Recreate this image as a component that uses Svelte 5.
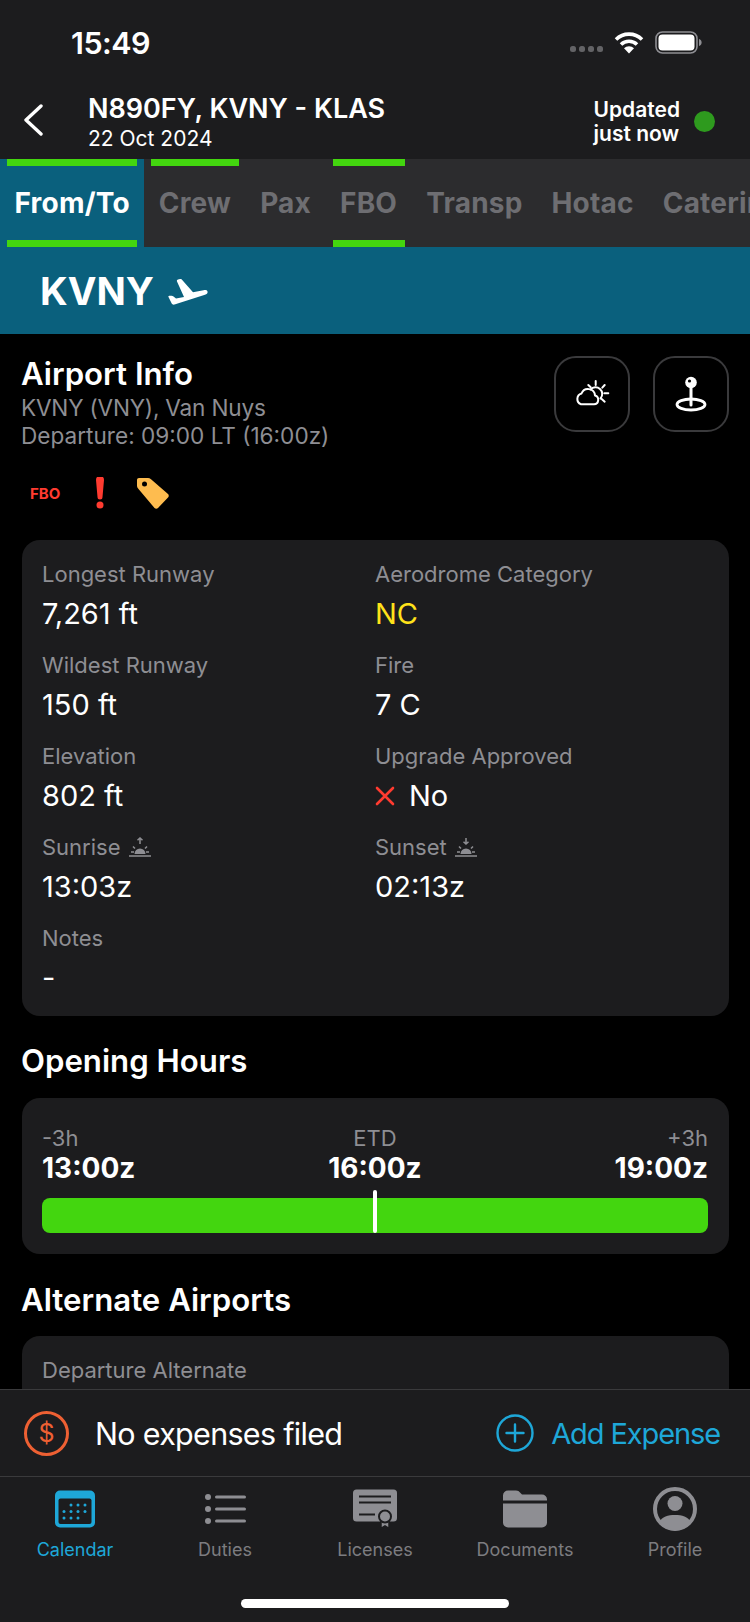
<script>
  const sections = [
    { label: 'From/To', top: true, bottom: true, active: true },
    { label: 'Crew', top: true },
    { label: 'Pax' },
    { label: 'FBO', top: true, bottom: true },
    { label: 'Transp' },
    { label: 'Hotac' },
    { label: 'Catering' },
  ];
</script>

<div class="screen">
  <header class="top">
    <div class="status">
      <span class="clock">15:49</span>
      <div class="status-icons">
        <div class="signal"><i></i><i></i><i></i><i></i></div>
        <svg width="30" height="23" viewBox="0 0 30 23" fill="none" stroke="#fff" stroke-width="3.6">
          <path d="M2 8.500a18.500 18.500 0 0 1 26 0" />
          <path d="M7 13.500a11.500 11.500 0 0 1 16 0" />
          <path d="M15 22.500l-5-5.200a7 7 0 0 1 10 0z" fill="#fff" stroke="none" />
        </svg>
        <svg width="47" height="23" viewBox="0 0 47 23">
          <rect x="1" y="1" width="41" height="21" rx="6.500" fill="none" stroke="#8e8e93" stroke-width="1.600" />
          <rect x="3.500" y="3.500" width="36" height="16" rx="4" fill="#fff" />
          <path d="M44 8c1.600.4 2.600 1.800 2.600 3.500S45.600 14.600 44 15z" fill="#8e8e93" />
        </svg>
      </div>
    </div>
    <div class="nav">
      <svg class="back" width="20" height="32" viewBox="0 0 20 32" fill="none" stroke="#fff" stroke-width="3.400" stroke-linecap="round" stroke-linejoin="round">
        <path d="M18 2L3 16l15 14" />
      </svg>
      <div class="nav-title">
        <div class="flight">N890FY, KVNY - KLAS</div>
        <div class="date">22 Oct 2024</div>
      </div>
      <div class="updated">Updated<br />just now</div>
      <span class="sync-dot"></span>
    </div>
  </header>

  <nav class="sections">
    {#each sections as s}
      <div class="section" class:active={s.active}>
        <div class="section-inner" class:bar-top={s.top} class:bar-bottom={s.bottom}>{s.label}</div>
      </div>
    {/each}
  </nav>

  <div class="banner">
    <span>KVNY</span>
    <svg width="40" height="26" viewBox="18 13 40 26" fill="#fff">
      <path d="M18.500 31c-.4-.8 0-1.300.8-1.300h2.200c.8 0 1.400.3 2 .8l2.500 2 8-1.400L27 15.500c-.4-.9 0-1.700 1-1.900l2-.6c.8-.2 1.400 0 2 .7l11 12.500 10.500-2c2-.4 3.600 0 4 1.300.4 1.400-.5 2.500-2.500 3.200L24.500 38.500c-1 .3-2.200.2-2.800-.9z" />
    </svg>
  </div>

  <main class="content">
    <div class="info-head">
      <div class="info-text">
        <h2>Airport Info</h2>
        <p class="place">KVNY (VNY), Van Nuys</p>
        <p>Departure: 09:00 LT (16:00z)</p>
      </div>
      <button class="square" aria-label="Weather">
        <svg width="36" height="28" viewBox="0 0 36 28" fill="none" stroke="#fff" stroke-width="2" stroke-linecap="round" stroke-linejoin="round">
          <path d="M7 24.300h13a4.500 4.500 0 0 0 1-8.800 7 7 0 0 0-13.500-2A5.700 5.700 0 0 0 7 24.300z" />
          <path d="M16.500 9.500a6.500 6.500 0 0 1 10 9" />
          <path d="M14.300 5l2.400 2.300M21.700 1v4M30.700 5l-2.400 2.700M34.300 13.300h-4M30.700 21.700l-3-2.700" />
        </svg>
      </button>
      <button class="square" aria-label="Map">
        <svg width="32" height="36" viewBox="0 0 32 36" fill="none">
          <ellipse cx="16" cy="28.500" rx="14" ry="5.500" stroke="#fff" stroke-width="2.800" />
          <path d="M16 8v21" stroke="#fff" stroke-width="3" stroke-linecap="round" />
          <circle cx="16" cy="6.500" r="5.800" fill="#fff" />
          <circle cx="14.500" cy="5" r="1.600" fill="#000" />
        </svg>
      </button>
    </div>

    <div class="flags">
      <span class="fbo">FBO</span>
      <svg width="12" height="32" viewBox="0 0 12 32" fill="#ff3b30">
        <path d="M2 3a4 4 0 0 1 8 0l-1.500 17a2.500 2.500 0 0 1-5 0z" />
        <circle cx="6" cy="28" r="3.500" />
      </svg>
      <svg width="33" height="33" viewBox="0 0 33 33" fill="#febc4f">
        <path d="M2 1h9c1 0 2 .4 3 1.200L31 17c1 1 1 2.500 0 3.500L21 31c-1 1-2.500 1-3.500 0L1.500 12C.5 11 0 10 0 9V3C0 1.800.8 1 2 1z" />
        <circle cx="7.500" cy="7" r="2.500" fill="#000" />
      </svg>
    </div>

    <section class="card facts">
      <div class="fact"><span>Longest Runway</span><strong>7,261 ft</strong></div>
      <div class="fact"><span>Aerodrome Category</span><strong class="yellow">NC</strong></div>
      <div class="fact"><span>Wildest Runway</span><strong>150 ft</strong></div>
      <div class="fact"><span>Fire</span><strong>7 C</strong></div>
      <div class="fact"><span>Elevation</span><strong>802 ft</strong></div>
      <div class="fact">
        <span>Upgrade Approved</span>
        <strong class="with-x">
          <svg width="20" height="20" viewBox="0 0 20 20" stroke="#ff3b30" stroke-width="2.600" stroke-linecap="round"><path d="M2 2l16 16M18 2L2 18" /></svg>
          No
        </strong>
      </div>
      <div class="fact">
        <span>Sunrise
          <svg class="sun" width="24" height="20" viewBox="0 0 24 20" fill="none" stroke="#8e8e93" stroke-width="1.500">
            <path d="M12 7V1M9.500 3.300L12 1l2.500 2.300M1 19h22M3 15h3M18 15h3M5 9.500l2 2M19 9.500l-2 2" />
            <path d="M6.500 17a5.500 5.500 0 0 1 11 0z" fill="#8e8e93" stroke="none" />
          </svg>
        </span>
        <strong>13:03z</strong>
      </div>
      <div class="fact">
        <span>Sunset
          <svg class="sun" width="24" height="20" viewBox="0 0 24 20" fill="none" stroke="#8e8e93" stroke-width="1.500">
            <path d="M12 1v6M9.500 4.700L12 7l2.500-2.300M1 19h22M3 15h3M18 15h3M5 9.500l2 2M19 9.500l-2 2" />
            <path d="M6.500 17a5.500 5.500 0 0 1 11 0z" fill="#8e8e93" stroke="none" />
          </svg>
        </span>
        <strong>02:13z</strong>
      </div>
      <div class="fact"><span>Notes</span><strong>-</strong></div>
    </section>

    <h2 class="block-title">Opening Hours</h2>
    <section class="card hours">
      <div class="hours-row">
        <div><span>-3h</span><strong>13:00z</strong></div>
        <div class="mid"><span>ETD</span><strong>16:00z</strong></div>
        <div class="end"><span>+3h</span><strong>19:00z</strong></div>
      </div>
      <div class="timeline"><i></i></div>
    </section>

    <h2 class="block-title alt">Alternate Airports</h2>
    <section class="card alternates">
      <span>Departure Alternate</span>
    </section>
  </main>

  <footer class="bottom">
    <div class="expenses">
      <div class="dollar">$</div>
      <span class="none">No expenses filed</span>
      <svg class="plus" width="38" height="38" viewBox="0 0 38 38" fill="none" stroke="#1ea7d8" stroke-width="2.400">
        <circle cx="19" cy="19" r="17.500" />
        <path d="M19 10.500v17M10.500 19h17" stroke-linecap="round" />
      </svg>
      <span class="add">Add Expense</span>
    </div>
    <div class="tabs">
      <div class="tab current">
        <svg width="40" height="37" viewBox="0 0 40 37">
          <rect width="40" height="37" rx="5" fill="#1ea7d8" />
          <rect x="3.500" y="8" width="33" height="25.500" rx="2" fill="#1c1c1e" />
          <g fill="#1ea7d8">
            <circle cx="16" cy="14.500" r="1.500" /><circle cx="23" cy="14.500" r="1.500" /><circle cx="30" cy="14.500" r="1.500" />
            <circle cx="9" cy="21" r="1.500" /><circle cx="16" cy="21" r="1.500" /><circle cx="23" cy="21" r="1.500" /><circle cx="30" cy="21" r="1.500" />
            <circle cx="9" cy="27.500" r="1.500" /><circle cx="16" cy="27.500" r="1.500" /><circle cx="23" cy="27.500" r="1.500" />
          </g>
        </svg>
        <span>Calendar</span>
      </div>
      <div class="tab">
        <svg width="41" height="30" viewBox="0 0 41 30" fill="#8e8e93">
          <circle cx="3" cy="3" r="3" /><circle cx="3" cy="15" r="3" /><circle cx="3" cy="27" r="3" />
          <rect x="10" y="1.500" width="31" height="3" rx="1.500" /><rect x="10" y="13.500" width="31" height="3" rx="1.500" /><rect x="10" y="25.500" width="31" height="3" rx="1.500" />
        </svg>
        <span>Duties</span>
      </div>
      <div class="tab">
        <svg width="44" height="39" viewBox="0 0 44 39">
          <rect width="44" height="32" rx="3.500" fill="#8e8e93" />
          <path d="M6 7h32M6 13h32M6 25h16" stroke="#1c1c1e" stroke-width="2" />
          <path d="M28 30v9l4-2.500 4 2.500v-9z" fill="#8e8e93" stroke="#1c1c1e" stroke-width="1.500" />
          <circle cx="32" cy="27" r="6" fill="#8e8e93" stroke="#1c1c1e" stroke-width="2" />
        </svg>
        <span>Licenses</span>
      </div>
      <div class="tab">
        <svg width="44" height="37" viewBox="0 0 44 37">
          <path d="M0 5a5 5 0 0 1 5-5h8c2 0 3 .7 4 2l2 2h20a5 5 0 0 1 5 5v1H0z" fill="#8e8e93" />
          <path d="M0 13h44v19a5 5 0 0 1-5 5H5a5 5 0 0 1-5-5z" fill="#8e8e93" />
        </svg>
        <span>Documents</span>
      </div>
      <div class="tab">
        <svg width="44" height="45" viewBox="0 0 44 45">
          <circle cx="22" cy="22.500" r="20" fill="none" stroke="#8e8e93" stroke-width="4" />
          <circle cx="22" cy="17" r="7.500" fill="#8e8e93" />
          <path d="M6 36c3-6 9-7.500 16-7.500S35 30 38 36a20 20 0 0 1-32 0z" fill="#8e8e93" />
        </svg>
        <span>Profile</span>
      </div>
    </div>
    <div class="home-bar"></div>
  </footer>
</div>

<style>
  :global(body) {
    background: #000;
  }

  .screen {
    width: 750px;
    height: 1622px;
    display: flex;
    flex-direction: column;
    overflow: hidden;
    background: #000;
    color: #fff;
    font-family: Inter, "Liberation Sans", sans-serif;
  }

  .top {
    height: 159px;
    background: #1c1c1e;
    flex: none;
  }

  .status {
    height: 84px;
    display: flex;
    align-items: center;
    justify-content: space-between;
    padding: 0 48px 0 71px;
  }

  .clock {
    font-size: 30.500px;
    font-weight: 600;
    letter-spacing: -0.5px;
    padding-top: 1px;
  }

  .status-icons {
    display: flex;
    align-items: center;
    gap: 11px;
  }

  .signal {
    display: flex;
    gap: 3px;
    padding-top: 14px;
  }

  .signal i {
    width: 6px;
    height: 6px;
    border-radius: 2.500px;
    background: #636366;
  }

  .nav {
    height: 75px;
    display: flex;
    align-items: center;
    padding: 0 35px 0 23px;
  }

  .back {
    margin-bottom: 4px;
  }

  .nav-title {
    flex: 1;
    margin-left: 45px;
  }

  .flight {
    font-size: 27px;
    font-weight: 600;
    line-height: 32px;
  }

  .date {
    font-size: 21px;
    line-height: 26px;
    margin-top: 1px;
    margin-bottom: -1px;
  }

  .updated {
    font-size: 21px;
    font-weight: 600;
    line-height: 24px;
    margin-top: 1px;
  }

  .sync-dot {
    width: 21px;
    height: 21px;
    border-radius: 50%;
    background: #2e9a1e;
    margin-left: 14px;
  }

  .sections {
    height: 88px;
    display: flex;
    background: #2c2c2e;
    flex: none;
    overflow: hidden;
  }

  .section {
    padding: 0 7px;
    flex: none;
  }

  .section.active {
    background: #0a607d;
    color: #fff;
  }

  .section-inner {
    height: 88px;
    box-sizing: border-box;
    border-top: 7px solid transparent;
    border-bottom: 7px solid transparent;
    padding: 0 7.500px;
    display: flex;
    align-items: center;
    font-size: 28px;
    font-weight: 700;
    letter-spacing: 0.2px;
    color: #6e6e72;
  }

  .active .section-inner {
    color: #fff;
  }

  .bar-top {
    border-top-color: #43d60f;
  }

  .bar-bottom {
    border-bottom-color: #43d60f;
  }

  .banner {
    height: 87px;
    flex: none;
    background: #0a607d;
    display: flex;
    align-items: center;
    gap: 14px;
    padding-left: 40px;
    font-size: 38.500px;
    font-weight: 700;
  }

  .banner svg {
    margin-top: 2px;
  }

  .content {
    flex: 1;
    min-height: 0;
    overflow: hidden;
    padding: 0 21px 0 22px;
  }

  .info-head {
    display: flex;
    gap: 23px;
    padding-top: 22px;
  }

  .info-text {
    flex: 1;
    margin-left: -1px;
  }

  h2 {
    margin: 0;
    font-size: 31.200px;
    font-weight: 600;
    line-height: 36px;
  }

  .info-text p {
    margin: 0;
    font-size: 22.600px;
    line-height: 28px;
    color: #8e8e93;
  }

  .info-text .place {
    margin-top: 2px;
    letter-spacing: -0.2px;
  }

  .square {
    width: 76px;
    height: 76px;
    flex: none;
    padding: 0;
    border: 2px solid #3a3a3c;
    border-radius: 22px;
    background: transparent;
    display: flex;
    align-items: center;
    justify-content: center;
  }

  .flags {
    display: flex;
    align-items: center;
    height: 34px;
    margin-top: 26px;
    padding-left: 8px;
    gap: 34px;
  }

  .fbo {
    font-size: 15px;
    font-weight: 700;
    color: #ff3b30;
  }

  .flags svg:last-child {
    margin-left: -3px;
  }

  .card {
    background: #1c1c1e;
    border-radius: 18px;
  }

  .facts {
    margin-top: 30px;
    padding: 17px 20px 0;
    height: 476px;
    box-sizing: border-box;
    display: grid;
    grid-template-columns: 333px 1fr;
    grid-auto-rows: 91px;
  }

  .fact span {
    display: flex;
    align-items: center;
    gap: 7px;
    height: 34px;
    font-size: 22px;
    color: #8e8e93;
  }

  .fact strong {
    display: block;
    margin-top: 3px;
    font-size: 29px;
    font-weight: 400;
    line-height: 40px;
  }

  .yellow {
    color: #ffe21a;
  }

  .fact .with-x {
    display: flex;
    align-items: center;
    gap: 14px;
  }

  .block-title {
    margin-top: 26px;
    margin-left: -1px;
    line-height: 38px;
  }

  .hours {
    margin-top: 18px;
    height: 156px;
    box-sizing: border-box;
    padding: 26px 21px 0 20px;
  }

  .hours-row {
    display: flex;
    justify-content: space-between;
  }

  .hours-row > div {
    display: flex;
    flex-direction: column;
  }

  .hours-row .mid {
    align-items: center;
  }

  .hours-row .end {
    align-items: flex-end;
  }

  .hours-row span {
    font-size: 22px;
    line-height: 28px;
    color: #8e8e93;
  }

  .hours-row strong {
    font-size: 28px;
    line-height: 32px;
    font-weight: 700;
  }

  .timeline {
    position: relative;
    height: 35px;
    margin-top: 14px;
    background: #43d60f;
    border-radius: 8px;
  }

  /* marker pokes above the bar */
  .timeline i {
    position: absolute;
    left: 331px;
    top: -8px;
    bottom: 0;
    width: 4px;
    border-radius: 2px;
    background: #fff;
  }

  .block-title.alt {
    margin-top: 27px;
  }

  .alternates {
    margin-top: 17px;
    height: 120px;
    padding: 21px 20px 0;
    font-size: 22px;
    color: #8e8e93;
  }

  .bottom {
    height: 233px;
    flex: none;
    box-sizing: border-box;
    background: #1c1c1e;
    border-top: 1px solid #3a3a3c;
  }

  .expenses {
    height: 87px;
    box-sizing: border-box;
    border-bottom: 1px solid #3a3a3c;
    display: flex;
    align-items: center;
    padding: 0 30px 0 24px;
  }

  .dollar {
    width: 45px;
    height: 45px;
    box-sizing: border-box;
    border: 3px solid #ee6033;
    border-radius: 50%;
    color: #ee6033;
    font-size: 25px;
    display: flex;
    align-items: center;
    justify-content: center;
  }

  .none {
    flex: 1;
    margin-left: 26px;
    font-size: 30.500px;
    letter-spacing: -0.7px;
  }

  .add {
    margin-left: 17px;
    font-size: 29px;
    letter-spacing: -1.100px;
    color: #1ea7d8;
  }

  .tabs {
    display: flex;
    height: 122px;
  }

  .tab {
    width: 150px;
    flex: none;
    display: flex;
    flex-direction: column;
    align-items: center;
    font-size: 18px;
    color: #7c7c80;
  }

  .tab svg {
    height: 46px;
    margin-top: 9px;
  }

  .tab span {
    margin-top: 6px;
    line-height: 24px;
  }

  .tab.current {
    color: #1ea7d8;
  }

  .home-bar {
    width: 268px;
    height: 9px;
    margin: 0 auto;
    border-radius: 5px;
    background: #fff;
  }
</style>
